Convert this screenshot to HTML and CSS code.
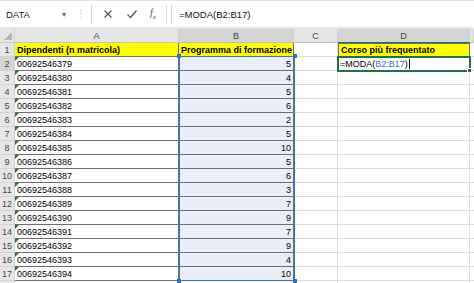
FILE: index.html
```html
<!DOCTYPE html>
<html>
<head>
<meta charset="utf-8">
<link rel="stylesheet" href="styles.css">
</head>
<body>
<div class="app">
  <div class="fbar">
    <div class="namebox"><span>DATA</span><span class="dd">&#9662;</span></div>
    <div class="grip">&#8942;</div>
    <div class="btns">
      <svg class="ic" width="12" height="12" viewBox="0 0 12 12"><path d="M2.5 2.5 L9.5 9.5 M9.5 2.5 L2.5 9.5" stroke="#555" stroke-width="1.2" fill="none"/></svg>
      <svg class="ic" width="12" height="12" viewBox="0 0 12 12"><path d="M1.5 6.5 L4.5 9.5 L10.5 2.5" stroke="#555" stroke-width="1.3" fill="none"/></svg>
      <span class="fx">f<sub>x</sub></span>
    </div>
    <div class="finput">=MODA(B2:B17)</div>
  </div>
  <div class="gap"></div>
  <div class="grid">
    <div class="corner"><svg width="10" height="10" viewBox="0 0 10 10"><path d="M9 1 L9 9 L1 9 Z" fill="#b4b4b4"/></svg></div>
    <div class="ch">A</div>
    <div class="ch sel">B</div>
    <div class="ch">C</div>
    <div class="ch act">D</div>
    <div class="ch end"></div>

    <div class="rh">1</div>
    <div class="c a y b">Dipendenti (n matricola)</div>
    <div class="c bb y b">Programma di formazione</div>
    <div class="c cc"></div>
    <div class="c d y b dh">Corso più frequentato</div>
    <div class="c e"></div>

    <div class="rh hl">2</div><div class="c a t">00692546379</div><div class="c bb fill">5</div><div class="c cc"></div><div class="c d act2">=MODA(<span class="blue">B2:B17</span>)<span class="cur"></span><span class="handle"></span></div><div class="c e"></div>
    <div class="rh">3</div><div class="c a t">00692546380</div><div class="c bb fill">4</div><div class="c cc"></div><div class="c d"></div><div class="c e"></div>
    <div class="rh">4</div><div class="c a t">00692546381</div><div class="c bb fill">5</div><div class="c cc"></div><div class="c d"></div><div class="c e"></div>
    <div class="rh">5</div><div class="c a t">00692546382</div><div class="c bb fill">6</div><div class="c cc"></div><div class="c d"></div><div class="c e"></div>
    <div class="rh">6</div><div class="c a t">00692546383</div><div class="c bb fill">2</div><div class="c cc"></div><div class="c d"></div><div class="c e"></div>
    <div class="rh">7</div><div class="c a t">00692546384</div><div class="c bb fill">5</div><div class="c cc"></div><div class="c d"></div><div class="c e"></div>
    <div class="rh">8</div><div class="c a t">00692546385</div><div class="c bb fill">10</div><div class="c cc"></div><div class="c d"></div><div class="c e"></div>
    <div class="rh">9</div><div class="c a t">00692546386</div><div class="c bb fill">5</div><div class="c cc"></div><div class="c d"></div><div class="c e"></div>
    <div class="rh">10</div><div class="c a t">00692546387</div><div class="c bb fill">6</div><div class="c cc"></div><div class="c d"></div><div class="c e"></div>
    <div class="rh">11</div><div class="c a t">00692546388</div><div class="c bb fill">3</div><div class="c cc"></div><div class="c d"></div><div class="c e"></div>
    <div class="rh">12</div><div class="c a t">00692546389</div><div class="c bb fill">7</div><div class="c cc"></div><div class="c d"></div><div class="c e"></div>
    <div class="rh">13</div><div class="c a t">00692546390</div><div class="c bb fill">9</div><div class="c cc"></div><div class="c d"></div><div class="c e"></div>
    <div class="rh">14</div><div class="c a t">00692546391</div><div class="c bb fill">7</div><div class="c cc"></div><div class="c d"></div><div class="c e"></div>
    <div class="rh">15</div><div class="c a t">00692546392</div><div class="c bb fill">9</div><div class="c cc"></div><div class="c d"></div><div class="c e"></div>
    <div class="rh">16</div><div class="c a t">00692546393</div><div class="c bb fill">4</div><div class="c cc"></div><div class="c d"></div><div class="c e"></div>
    <div class="rh">17</div><div class="c a t">00692546394</div><div class="c bb fill">10</div><div class="c cc"></div><div class="c d"></div><div class="c e"></div>
    <div class="rh"></div><div class="c n"></div><div class="c n"></div><div class="c cc"></div><div class="c d"></div><div class="c e"></div>
  </div>
  <div class="range"><i class="tl"></i><i class="tr"></i><i class="bl"></i><i class="br"></i></div>
</div>
</body>
</html>
```
FILE: styles.css
```css
* { box-sizing: border-box; }
html, body { margin: 0; padding: 0; }
body { width: 474px; height: 283px; overflow: hidden; background: #fff; font-family: "Liberation Sans", Arial, sans-serif; }
.app { position: relative; }
.fbar { height: 27px; display: flex; align-items: center; background: #fff; padding: 3px 0 3px 3px; border-top: 1px solid #e3e3e3; }
.namebox { width: 66px; height: 19px; display: flex; align-items: center; justify-content: space-between; padding: 0 3px 0 3px; font-size: 9.5px; color: #222; }
.dd { font-size: 8px; color: #666; }
.grip { width: 22px; text-align: center; color: #b8b8b8; font-size: 11px; }
.btns { width: 76px; height: 19px; display: flex; align-items: center; justify-content: space-around; border-left: 1px solid #d6d6d6; border-right: 1px solid #d6d6d6; padding: 0 4px; }
.fx { font-family: "Liberation Serif", serif; font-style: italic; font-size: 10px; color: #555; }
.fx sub { font-size: 7px; }
.finput { flex: 1; height: 19px; display: flex; align-items: center; padding-left: 7px; font-size: 9.5px; color: #111; margin-left: 4px; border-left: 1px solid #d6d6d6; }
.gap { height: 2px; background: #e6e6e6; }
.grid { display: grid; grid-template-columns: 15px 164px 115px 44px 132px 4px; grid-auto-rows: 14px; }
.grid > div { font-size: 9px; }
.corner { background: #e6e6e6; border-right: 1px solid #d0d0d0; border-bottom: 1px solid #c8c8c8; display: flex; align-items: flex-end; justify-content: flex-end; padding: 0 1px 1px 0; }
.ch { background: #e6e6e6; border-right: 1px solid #cfcfcf; border-bottom: 1px solid #c0c0c0; display: flex; align-items: center; justify-content: center; color: #444; font-size: 9px; }
.ch.sel { background: #d4d4d4; }
.ch.act { background: #d4d4d4; border-bottom: 1px solid #217346; }
.rh { background: #e6e6e6; border-right: 1px solid #cfcfcf; border-bottom: 1px solid #d4d4d4; display: flex; align-items: center; justify-content: center; color: #444; font-size: 9px; }
.rh.hl { background: #d4d4d4; }
.c { border-right: 1px solid #dcdcdc; border-bottom: 1px solid #dcdcdc; display: flex; align-items: center; padding: 0 2px; color: #000; white-space: nowrap; overflow: visible; position: relative; }
.c.a { border-right: 1px solid #6e6e6e; border-bottom: 1px solid #6e6e6e; }
.c.bb { border-right: 1px solid #6e6e6e; border-bottom: 1px solid #6e6e6e; justify-content: flex-end; }
.c.bb.y { justify-content: flex-start; }
.c.fill { background: #e9eef8; }
.c.y { background: #ffff00; }
.c.b { font-weight: bold; }
.c.dh { border: 1px solid #6e6e6e; }
.c.e { border-right: none; }
.c.a.t::before { content: ""; position: absolute; left: 0; top: 0; border-top: 4px solid #1e7145; border-right: 4px solid transparent; }
.c.act2 { outline: 2px solid #217346; outline-offset: -1px; z-index: 2; }
.blue { color: #3a6fc9; }
.cur { display: inline-block; width: 1px; height: 10px; background: #000; margin-left: 1px; }
.handle { position: absolute; right: -3px; bottom: -3px; width: 5px; height: 5px; background: #217346; border: 1px solid #fff; }
.range { position: absolute; left: 179px; top: 56px; width: 116px; height: 225px; border: 1.5px solid #3a6fc9; pointer-events: none; z-index: 3; }
.range i { position: absolute; width: 4px; height: 4px; background: #3a6fc9; }
.range .tl { left: -3px; top: -3px; }
.range .tr { right: -3px; top: -3px; }
.range .bl { left: -3px; bottom: -3px; }
.range .br { right: -3px; bottom: -3px; }
```
